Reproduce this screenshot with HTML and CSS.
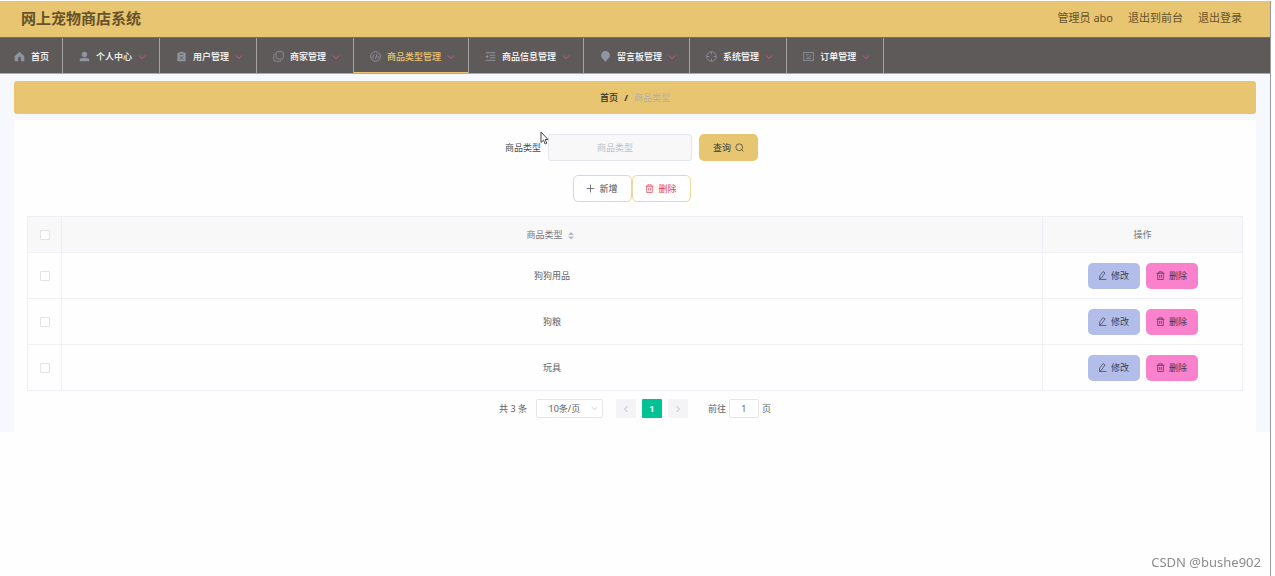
FILE: index.html
```html
<!DOCTYPE html>
<html lang="zh-CN">
<head>
  <meta charset="UTF-8">
  <meta name="viewport" content="width=device-width, initial-scale=1">
  <title>网上宠物商店系统</title>
  <link rel="stylesheet" href="styles.css">
</head>
<body>

  <svg class="sprite" aria-hidden="true">
    <symbol id="i-home" viewBox="0 0 16 16"><path d="M8 1 1 7.5V15h5v-4.500a2 2 0 0 1 4 0V15h5V7.500z" fill="currentColor"/></symbol>
    <symbol id="i-user" viewBox="0 0 16 16"><circle cx="8" cy="5" r="4" fill="currentColor"/><path d="M1 15v-2q0-3 4-3h6q4 0 4 3v2z" fill="currentColor"/></symbol>
    <symbol id="i-clip" viewBox="0 0 16 16"><path d="M2 2.500h3V1h6v1.500h3V15H2z" fill="currentColor"/><path d="M5 4.500h6M5.500 7.500l5 5m0-5-5 5" stroke="#5d5a59" stroke-width="1.300" fill="none"/></symbol>
    <symbol id="i-copy" viewBox="0 0 16 16"><g fill="none" stroke="currentColor" stroke-width="1.200"><rect x="4.500" y="1" width="10.500" height="10.500" rx="2"/><path d="M3 4q-2 .5-2 2.500V12q0 3 3 3h5.500q2 0 2.500-2"/></g></symbol>
    <symbol id="i-gauge" viewBox="0 0 16 16"><g fill="none" stroke="currentColor" stroke-width="1.300"><circle cx="8" cy="8" r="7"/><path d="M4.500 10.500a4 4 0 0 1 2-5.500m5 5.500q.8-2 0-3.500M10 4.500l-2 7" /></g></symbol>
    <symbol id="i-list" viewBox="0 0 16 16"><path d="M1 2.500h14M7 6.200h8M7 9.800h8M1 13.500h14M1 8h4M3.500 6v4" fill="none" stroke="currentColor" stroke-width="1.400"/></symbol>
    <symbol id="i-pin" viewBox="0 0 16 16"><path d="M8 0a6.500 6.500 0 0 0-6.500 6.500C1.500 10 5 11.500 8 16c3-4.500 6.500-6 6.500-9.500A6.500 6.500 0 0 0 8 0z" fill="currentColor"/></symbol>
    <symbol id="i-aim" viewBox="0 0 16 16"><g fill="none" stroke="currentColor" stroke-width="1.200"><circle cx="8" cy="8" r="7"/><path d="M8 1v4m0 6v4M1 8h4m6 0h4"/></g></symbol>
    <symbol id="i-order" viewBox="0 0 16 16"><g fill="none" stroke="currentColor" stroke-width="1.200"><rect x="1" y="2" width="14" height="12"/><path d="M4 5.500h4M4 11h8M6 8l2 1.500L12 6"/></g></symbol>
    <symbol id="i-down" viewBox="0 0 16 16"><path d="m2 5 6 6 6-6" fill="none" stroke="currentColor" stroke-width="2"/></symbol>
    <symbol id="i-left" viewBox="0 0 16 16"><path d="M11 2 5 8l6 6" fill="none" stroke="currentColor" stroke-width="1.800"/></symbol>
    <symbol id="i-right" viewBox="0 0 16 16"><path d="m5 2 6 6-6 6" fill="none" stroke="currentColor" stroke-width="1.800"/></symbol>
    <symbol id="i-search" viewBox="0 0 16 16"><g fill="none" stroke="currentColor" stroke-width="1.300"><circle cx="7.500" cy="7.500" r="6"/><path d="m12 12 3 3"/></g></symbol>
    <symbol id="i-plus" viewBox="0 0 16 16"><path d="M8 1v14M1 8h14" fill="none" stroke="currentColor" stroke-width="1.300"/></symbol>
    <symbol id="i-trash" viewBox="0 0 16 16"><path d="M1 4h14M5 4V1.500h6V4M3 4v11h10V4M6.500 7v5M9.500 7v5" fill="none" stroke="currentColor" stroke-width="1.300"/></symbol>
    <symbol id="i-edit" viewBox="0 0 16 16"><path d="m3 9 6-8 3.500 2.500-6 8.500L2.500 14zM2 15h13" fill="none" stroke="currentColor" stroke-width="1.300"/></symbol>
  </svg>

  <div class="page">
    <header class="header">
      <h1 class="title">网上宠物商店系统</h1>
      <div class="user-links">
        <span>管理员 abo</span>
        <a href="#">退出到前台</a>
        <a href="#">退出登录</a>
      </div>
    </header>

    <nav class="menu">
      <a class="menu-item home" href="#"><svg class="icon"><use href="#i-home"/></svg><span>首页</span></a>
      <a class="menu-item" href="#"><svg class="icon"><use href="#i-user"/></svg><span>个人中心</span><svg class="arrow"><use href="#i-down"/></svg></a>
      <a class="menu-item" href="#"><svg class="icon"><use href="#i-clip"/></svg><span>用户管理</span><svg class="arrow"><use href="#i-down"/></svg></a>
      <a class="menu-item" href="#"><svg class="icon"><use href="#i-copy"/></svg><span>商家管理</span><svg class="arrow"><use href="#i-down"/></svg></a>
      <a class="menu-item active" href="#"><svg class="icon"><use href="#i-gauge"/></svg><span>商品类型管理</span><svg class="arrow"><use href="#i-down"/></svg></a>
      <a class="menu-item" href="#"><svg class="icon"><use href="#i-list"/></svg><span>商品信息管理</span><svg class="arrow"><use href="#i-down"/></svg></a>
      <a class="menu-item" href="#"><svg class="icon"><use href="#i-pin"/></svg><span>留言板管理</span><svg class="arrow"><use href="#i-down"/></svg></a>
      <a class="menu-item" href="#"><svg class="icon"><use href="#i-aim"/></svg><span>系统管理</span><svg class="arrow"><use href="#i-down"/></svg></a>
      <a class="menu-item" href="#"><svg class="icon"><use href="#i-order"/></svg><span>订单管理</span><svg class="arrow"><use href="#i-down"/></svg></a>
    </nav>

    <main class="main">
      <div class="breadcrumb">
        <a href="#">首页</a><span class="sep">/</span><span class="current">商品类型</span>
      </div>

      <section class="content">
        <form class="search" onsubmit="return false;">
          <label for="typeName">商品类型
            <svg class="cursor" viewBox="0 0 9 14"><path d="M1 1v10.500l2.500-2.300 1.700 3.800 1.600-.8L5.200 8.500H8z" fill="#fff" stroke="#444"/></svg>
          </label>
          <input type="text" id="typeName" placeholder="商品类型">
          <button type="submit" class="btn btn-search">查询<svg class="icon"><use href="#i-search"/></svg></button>
        </form>

        <div class="actions">
          <button type="button" class="btn btn-add"><svg class="icon"><use href="#i-plus"/></svg>新增</button>
          <button type="button" class="btn btn-remove"><svg class="icon"><use href="#i-trash"/></svg>删除</button>
        </div>

        <table class="table">
          <colgroup><col class="col-check"><col><col class="col-op"></colgroup>
          <thead>
            <tr>
              <th><input type="checkbox" aria-label="全选"></th>
              <th>商品类型<svg class="sort" viewBox="0 0 6 9"><path d="M0 4h6L3 1zM0 5.500h6l-3 3z" fill="#b4b8c0"/></svg></th>
              <th>操作</th>
            </tr>
          </thead>
          <tbody>
            <tr>
              <td><input type="checkbox" aria-label="狗狗用品"></td>
              <td>狗狗用品</td>
              <td>
                <div class="row-btns">
                  <button type="button" class="btn btn-edit"><svg class="icon"><use href="#i-edit"/></svg>修改</button>
                  <button type="button" class="btn btn-delete"><svg class="icon"><use href="#i-trash"/></svg>删除</button>
                </div>
              </td>
            </tr>
            <tr>
              <td><input type="checkbox" aria-label="狗粮"></td>
              <td>狗粮</td>
              <td>
                <div class="row-btns">
                  <button type="button" class="btn btn-edit"><svg class="icon"><use href="#i-edit"/></svg>修改</button>
                  <button type="button" class="btn btn-delete"><svg class="icon"><use href="#i-trash"/></svg>删除</button>
                </div>
              </td>
            </tr>
            <tr>
              <td><input type="checkbox" aria-label="玩具"></td>
              <td>玩具</td>
              <td>
                <div class="row-btns">
                  <button type="button" class="btn btn-edit"><svg class="icon"><use href="#i-edit"/></svg>修改</button>
                  <button type="button" class="btn btn-delete"><svg class="icon"><use href="#i-trash"/></svg>删除</button>
                </div>
              </td>
            </tr>
          </tbody>
        </table>

        <div class="pagination">
          <span>共 3 条</span>
          <div class="size">
            <select aria-label="每页条数">
              <option>10条/页</option>
              <option>20条/页</option>
            </select>
            <svg class="arrow"><use href="#i-down"/></svg>
          </div>
          <div class="pager">
            <button type="button" aria-label="上一页" disabled><svg><use href="#i-left"/></svg></button>
            <button type="button" class="on">1</button>
            <button type="button" aria-label="下一页" disabled><svg><use href="#i-right"/></svg></button>
          </div>
          <div class="jump">
            <label for="jump">前往</label>
            <input type="text" id="jump" value="1">
            <span>页</span>
          </div>
        </div>
      </section>
    </main>
  </div>

  <div class="watermark">CSDN @bushe902</div>

</body>
</html>
```
FILE: styles.css
```css
* {
  box-sizing: border-box;
}
body {
  margin: 0;
  padding: 1px 4px 0 0;
  background: #fefefe;
  font-family: "Noto Sans", "Noto Sans CJK SC", sans-serif;
  font-size: 9px;
  line-height: 14px;
  color: #606266;
}
a {
  color: inherit;
  text-decoration: none;
}
input,
select,
button {
  font: inherit;
  color: inherit;
}
.sprite {
  display: none;
}
.icon {
  width: 9px;
  height: 9px;
}
.page {
  min-height: calc(100vh - 1px);
  border-right: 1px solid #999;
}

/* header */
.header {
  display: flex;
  justify-content: space-between;
  align-items: center;
  height: 36px;
  padding: 0 28px 2px 21px;
  background: #e8c571;
  color: #66522a;
}
.title {
  margin: 0;
  font-size: 15px;
  line-height: 20px;
  font-weight: bold;
}
.user-links {
  display: flex;
  gap: 15px;
  font-size: 11px;
}

/* menu */
.menu {
  display: flex;
  height: 37px;
  background: #5d5a59;
  border-top: 1px solid #7b6d50;
  border-bottom: 1px solid #aaa8a8;
  color: #fff;
  font-weight: 500;
}
.menu-item {
  display: flex;
  align-items: center;
  gap: 6px;
  padding: 2px 13px 0 16px;
  border-right: 1px solid #a5a3a2;
}
.menu-item.home {
  padding-left: 14px;
}
.menu-item .icon {
  width: 11px;
  height: 11px;
  color: #9093a0;
}
.menu-item .arrow {
  width: 8px;
  height: 8px;
  color: #d8509c;
}
.menu-item.active {
  color: #e8c571;
  box-shadow: inset 0 -1px #e8c571;
}

/* main */
.main {
  padding: 7px 14px 0;
  background: #f7f8fd;
}
.breadcrumb {
  display: flex;
  justify-content: center;
  align-items: center;
  gap: 6px;
  height: 33px;
  border-radius: 3px;
  background: #e8c571;
  color: #303133;
  font-weight: 500;
}
.breadcrumb .sep {
  font-weight: bold;
}
.breadcrumb .current {
  color: #b5b1a0;
  font-weight: 400;
}
.content {
  margin-top: 6px;
  padding: 14px 13px;
  background: #fefefe;
}
.btn {
  display: flex;
  justify-content: center;
  align-items: center;
  gap: 4px;
  width: 59px;
  height: 27px;
  padding: 0;
  border: 1px solid transparent;
  border-radius: 5px;
  cursor: pointer;
}
.search,
.actions {
  display: flex;
  justify-content: center;
  align-items: center;
  padding-right: 7px;
}
.search {
  gap: 7px;
}
.search label {
  position: relative;
  color: #4c4e52;
}
.cursor {
  position: absolute;
  top: -10px;
  right: -8px;
  z-index: 1;
  width: 9px;
  height: 14px;
}
.search input {
  width: 144px;
  height: 27px;
  padding: 0 14px 0 4px;
  border: 1px solid #e4e6ee;
  border-radius: 3px;
  background: #f8f8f9;
  text-align: center;
}
.search input::placeholder {
  color: #bcc0ca;
}
.btn-search {
  background: #e8c571;
  color: #3f3a30;
}
.actions {
  margin: 14px 0;
}
.btn-add,
.btn-remove {
  background: #fff;
  border-color: #ecd79c;
  color: #4c4e52;
}
.btn-remove {
  color: #dc3c55;
}

/* table */
.table {
  width: 100%;
  table-layout: fixed;
  border-collapse: collapse;
  text-align: center;
}
.col-check {
  width: 34px;
}
.col-op {
  width: 200px;
}
.table th,
.table td {
  height: 46px;
  padding: 0;
  border: 1px solid #eff0f6;
}
.table th {
  height: 36px;
  background: #f8f8f9;
  color: #75787e;
  font-weight: 400;
}
.table input {
  appearance: none;
  display: block;
  width: 10px;
  height: 10px;
  margin: 0 auto;
  border: 1px solid #e2e3e9;
  border-radius: 1px;
  background: #fff;
}
.sort {
  width: 6px;
  height: 9px;
  margin: 0 4px 0 5px;
  vertical-align: middle;
}
.row-btns {
  display: flex;
  justify-content: center;
  gap: 6px;
}
.row-btns .btn {
  width: 52px;
  height: 26px;
}
.btn-edit {
  background: #b2bdea;
  color: #3c4055;
}
.btn-delete {
  background: #fa82cc;
  color: #4f3048;
}

/* pagination */
.pagination {
  display: flex;
  justify-content: center;
  align-items: center;
  margin-top: 8px;
}
.size {
  position: relative;
  margin: 0 13px 0 9px;
}
.size select {
  appearance: none;
  width: 67px;
  height: 19px;
  padding: 0 10px 0 0;
  border: 1px solid #e4e6ec;
  border-radius: 2px;
  background: #fff;
  text-align: center;
  text-align-last: center;
}
.size .arrow {
  position: absolute;
  top: 6px;
  right: 5px;
  width: 7px;
  height: 7px;
  color: #c0c4cc;
  pointer-events: none;
}
.pager {
  display: flex;
  gap: 6px;
}
.pager button {
  display: flex;
  justify-content: center;
  align-items: center;
  width: 20px;
  height: 19px;
  padding: 0;
  border: 0;
  border-radius: 1px;
  background: #f4f4f6;
  color: #b4b8c0;
}
.pager svg {
  width: 8px;
  height: 8px;
}
.pager .on {
  background: #00c292;
  color: #fff;
  font-weight: bold;
}
.jump {
  display: flex;
  align-items: center;
  gap: 3px;
  margin-left: 20px;
}
.jump input {
  width: 30px;
  height: 19px;
  padding: 0;
  border: 1px solid #e4e6ec;
  border-radius: 2px;
  background: #fff;
  text-align: center;
}

.watermark {
  position: fixed;
  right: 14px;
  bottom: 5px;
  font-size: 13px;
  line-height: 18px;
  color: #8c8c8c;
}
```
